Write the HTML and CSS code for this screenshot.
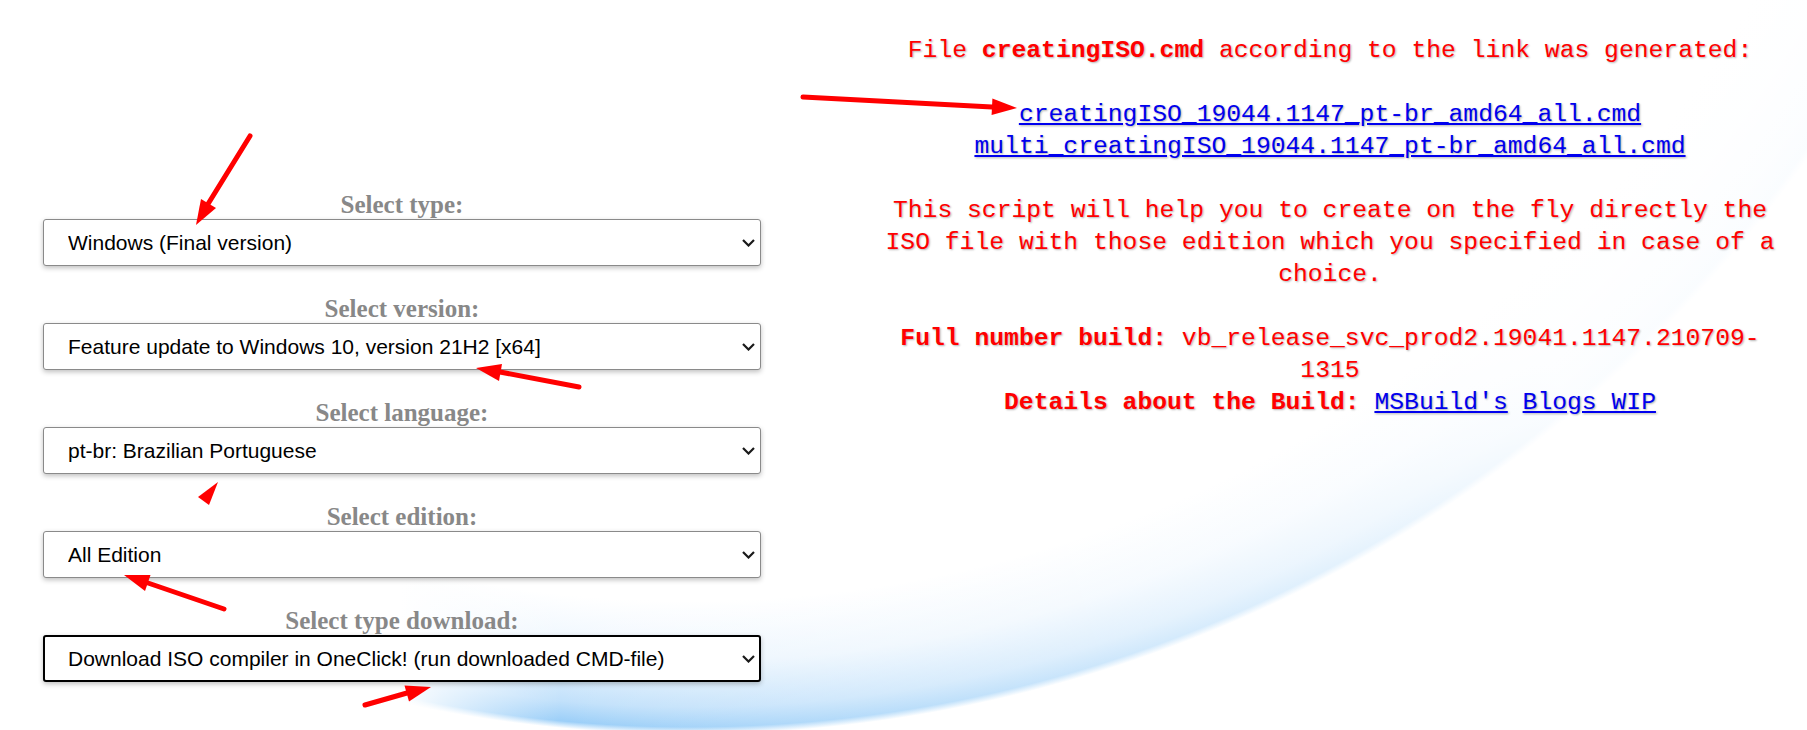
FILE: index.html
```html
<!DOCTYPE html>
<html lang="en">
<head>
    <meta charset="UTF-8">
    <title>Creating ISO</title>
    <link rel="stylesheet" href="styles.css">
</head>
<body>
    <div class="page">
        <!-- Selection form -->
        <form class="form-col">
            <div class="field">
                <label for="type">Select type:</label>
                <div class="select-wrap">
                    <select id="type">
                        <option selected>Windows (Final version)</option>
                        <option>Windows (Insider version)</option>
                    </select>
                    <svg class="chevron" width="13" height="8" viewBox="0 0 13 8"><path d="M1 1l5.5 5.5L12 1"/></svg>
                </div>
            </div>
            <div class="field">
                <label for="version">Select version:</label>
                <div class="select-wrap">
                    <select id="version">
                        <option selected>Feature update to Windows 10, version 21H2 [x64]</option>
                    </select>
                    <svg class="chevron" width="13" height="8" viewBox="0 0 13 8"><path d="M1 1l5.5 5.5L12 1"/></svg>
                </div>
            </div>
            <div class="field">
                <label for="lang">Select language:</label>
                <div class="select-wrap">
                    <select id="lang">
                        <option selected>pt-br: Brazilian Portuguese</option>
                        <option>en-us: English (United States)</option>
                    </select>
                    <svg class="chevron" width="13" height="8" viewBox="0 0 13 8"><path d="M1 1l5.5 5.5L12 1"/></svg>
                </div>
            </div>
            <div class="field">
                <label for="edition">Select edition:</label>
                <div class="select-wrap">
                    <select id="edition">
                        <option selected>All Edition</option>
                    </select>
                    <svg class="chevron" width="13" height="8" viewBox="0 0 13 8"><path d="M1 1l5.5 5.5L12 1"/></svg>
                </div>
            </div>
            <div class="field">
                <label for="download">Select type download:</label>
                <div class="select-wrap">
                    <select id="download" class="focused">
                        <option selected>Download ISO compiler in OneClick! (run downloaded CMD-file)</option>
                    </select>
                    <svg class="chevron" width="13" height="8" viewBox="0 0 13 8"><path d="M1 1l5.5 5.5L12 1"/></svg>
                </div>
            </div>
        </form>

        <!-- Result info -->
        <div class="info">
            <p>File <b>creatingISO.cmd</b> according to the link was generated:</p>
            <p>
                <a href="#">creatingISO_19044.1147_pt-br_amd64_all.cmd</a><br>
                <a href="#">multi_creatingISO_19044.1147_pt-br_amd64_all.cmd</a>
            </p>
            <p>This script will help you to create on the fly directly the ISO file with those edition which you specified in case of a choice.</p>
            <p>
                <b>Full number build:</b> vb_release_svc_prod2.19041.1147.210709-<wbr>1315<br>
                <b>Details about the Build:</b> <a href="#">MSBuild's</a> <a href="#">Blogs WIP</a>
            </p>
        </div>

        <!-- Annotation arrows -->
        <svg class="arrows" width="1807" height="730" viewBox="0 0 1807 730">
            <g stroke="#f00" stroke-width="5" stroke-linecap="round" fill="#f00">
                <line x1="250" y1="136" x2="208" y2="204"/>
                <polygon stroke="none" points="196,225 201,199 216,208"/>
                <line x1="803" y1="97" x2="992" y2="107"/>
                <polygon stroke="none" points="1017,108 991.6,115 992.4,98.5"/>
                <line x1="579" y1="387" x2="500" y2="372"/>
                <polygon stroke="none" points="476,368 502,364 499,381"/>
                <polygon stroke="none" points="218,482 198,497 209,505"/>
                <line x1="224" y1="609" x2="148" y2="583"/>
                <polygon stroke="none" points="124,575 150.5,575 145,591"/>
                <line x1="365" y1="705" x2="407" y2="693"/>
                <polygon stroke="none" points="431,687 409,701.5 404.5,685.5"/>
            </g>
        </svg>
    </div>
</body>
</html>
```

FILE: styles.css
```css
/* Global Styles */
body {
    margin: 0;
    padding: 0;
    font-family: "Liberation Sans", Arial, sans-serif;
    background: #fff;
}

.page {
    position: relative;
    display: flex;
    align-items: flex-start;
    height: 730px;
    overflow: hidden;
    background:
        linear-gradient(to right, #fff 400px, rgba(255, 255, 255, 0) 560px),
        linear-gradient(253deg, rgba(255, 255, 255, 0.95) 18%, rgba(255, 255, 255, 0.55) 42%, rgba(255, 255, 255, 0) 72%),
        radial-gradient(circle 1373px at 690px -639px, #fff 1240px, #ebf5fe 1300px, #c2e1fb 1346px, #9ccff8 1366px, #fff 1373px);
}

/* Selection form */
.form-col {
    width: 804px;
    box-sizing: border-box;
    padding: 162px 43px 0;
    margin: 0;
}

.field {
    margin-top: 28px;
}

.field label {
    display: block;
    text-align: center;
    font: bold 25px/29px "Liberation Serif", "Times New Roman", serif;
    color: #888;
}

.select-wrap {
    position: relative;
}

.field select {
    display: block;
    width: 100%;
    height: 47px;
    box-sizing: border-box;
    padding: 0 40px 0 24px;
    font: 21px "Liberation Sans", Arial, sans-serif;
    color: #000;
    background: #fff;
    border: 1px solid #8a8a8a;
    border-radius: 3px;
    box-shadow: 0 2px 5px rgba(0, 0, 0, 0.25);
    appearance: none;
    -webkit-appearance: none;
}

.field select.focused {
    border: 2px solid #000;
    padding-left: 23px;
}

.chevron {
    position: absolute;
    right: 6px;
    top: 20px;
    pointer-events: none;
}

.chevron path {
    fill: none;
    stroke: #1a1a1a;
    stroke-width: 2.2;
}

/* Result info */
.info {
    width: 900px;
    margin-left: 76px;
    padding-top: 34px;
    display: flex;
    flex-direction: column;
    gap: 32px;
    text-align: center;
    font: 24.7px/32px "Liberation Mono", "Courier New", monospace;
    color: #f00;
    text-shadow: 1px 1px 2px rgba(0, 0, 0, 0.3);
}

.info p {
    margin: 0;
}

.info a {
    color: #0000ee;
}

/* Annotation arrows */
.arrows {
    position: absolute;
    top: 0;
    left: 0;
    pointer-events: none;
}
```
